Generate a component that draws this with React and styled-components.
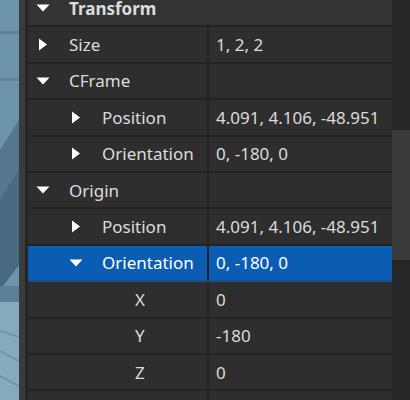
import React from 'react'
import styled, { createGlobalStyle } from 'styled-components'

const GlobalStyle = createGlobalStyle`
    html, body {
        margin: 0;
        padding: 0;
        background: #2e2e2e;
    }
    * {
        box-sizing: border-box;
    }
`

const Frame = styled.div`
    display: flex;
    width: 410px;
    height: 400px;
    overflow: hidden;
    font-family: "Noto Sans", "Open Sans", sans-serif;
    font-size: 17px;
    color: #dcdcdc;
`

const Viewport = styled.svg`
    flex: 0 0 19px;
    height: 400px;
    display: block;
`

const Splitter = styled.div`
    flex: 0 0 9px;
    background: #3b3b3b;
    border-right: 3px solid #262626;
`

const Panel = styled.div`
    flex: 1;
    display: flex;
    flex-direction: column;
    margin-top: -9px;
`

const Row = styled.div`
    display: grid;
    grid-template-columns: ${props => (props.$header ? '1fr' : '179px 2px 1fr')};
    height: 36.4px;
    flex: 0 0 36.4px;
    background: ${props => (props.$selected ? '#0b5cb3' : props.$header ? '#333333' : '#2e2e2e')};
    border-bottom: 2px solid ${props => (props.$selected ? '#1a4f8c' : '#222222')};
    color: ${props => (props.$selected ? '#ffffff' : '#dcdcdc')};
`

const NameCell = styled.div`
    display: flex;
    align-items: center;
    padding-left: ${props => 7 + props.$level * 33}px;
    white-space: nowrap;
    font-weight: ${props => (props.$header ? 700 : 400)};
`

const Toggle = styled.span`
    flex: 0 0 16px;
    width: 16px;
    height: 16px;
    display: flex;
    align-items: center;
    justify-content: center;
    margin-right: 18px;
`

const Divider = styled.div`
    background: #222222;
`

const ValueCell = styled.div`
    display: flex;
    align-items: center;
    padding-left: 7px;
    white-space: nowrap;
`

const Scrollbar = styled.div`
    flex: 0 0 18px;
    background: #262626;
    display: flex;
    flex-direction: column;
`

const Thumb = styled.div`
    margin-top: 130px;
    height: 130px;
    background: #3a3a3a;
`

function Arrow({ open }) {
    return open ? (
        <svg width="14" height="8" viewBox="0 0 14 8">
            <polygon points="0.5,0.5 13.5,0.5 7,7.5" fill="#ffffff" />
        </svg>
    ) : (
        <svg width="10" height="13" viewBox="0 0 10 13">
            <polygon points="1,0.5 9,6.5 1,12.5" fill="#ffffff" />
        </svg>
    )
}

const rows = [
    { name: 'Size', value: '1, 2, 2', level: 0, arrow: 'closed' },
    { name: 'CFrame', value: '', level: 0, arrow: 'open' },
    { name: 'Position', value: '4.091, 4.106, -48.951', level: 1, arrow: 'closed' },
    { name: 'Orientation', value: '0, -180, 0', level: 1, arrow: 'closed' },
    { name: 'Origin', value: '', level: 0, arrow: 'open' },
    { name: 'Position', value: '4.091, 4.106, -48.951', level: 1, arrow: 'closed' },
    { name: 'Orientation', value: '0, -180, 0', level: 1, arrow: 'open', selected: true },
    { name: 'X', value: '0', level: 2 },
    { name: 'Y', value: '-180', level: 2 },
    { name: 'Z', value: '0', level: 2 },
    { name: '', value: '', level: 0 },
]

export default function App() {
    return (
        <>
            <GlobalStyle />
            <Frame>
                <Viewport viewBox="0 0 19 400" preserveAspectRatio="none">
                    <rect x="0" y="0" width="19" height="400" fill="#6c94ab" />
                    <rect x="0" y="31" width="19" height="3" fill="#5c8199" />
                    <rect x="0" y="78" width="19" height="3" fill="#5f849b" />
                    <polygon points="0,150 19,120 19,250 0,280" fill="#55778e" />
                    <polygon points="0,200 19,170 19,265 0,290" fill="#486a80" />
                    <rect x="0" y="286" width="19" height="16" fill="#5b7f97" />
                    <rect x="0" y="302" width="19" height="98" fill="#86aabd" />
                    <polygon points="0,330 19,336 19,338 0,332" fill="#6f93a8" />
                    <polygon points="0,350 19,360 19,362 0,352" fill="#6f93a8" />
                    <polygon points="0,375 19,385 19,387 0,377" fill="#6f93a8" />
                </Viewport>
                <Splitter />
                <Panel>
                    <Row $header>
                        <NameCell $level={0} $header>
                            <Toggle><Arrow open /></Toggle>
                            Transform
                        </NameCell>
                    </Row>
                    {rows.map((r, i) => (
                        <Row key={i} $selected={r.selected}>
                            <NameCell $level={r.level}>
                                <Toggle>{r.arrow && <Arrow open={r.arrow === 'open'} />}</Toggle>
                                {r.name}
                            </NameCell>
                            <Divider />
                            <ValueCell>{r.value}</ValueCell>
                        </Row>
                    ))}
                </Panel>
                <Scrollbar>
                    <Thumb />
                </Scrollbar>
            </Frame>
        </>
    )
}
